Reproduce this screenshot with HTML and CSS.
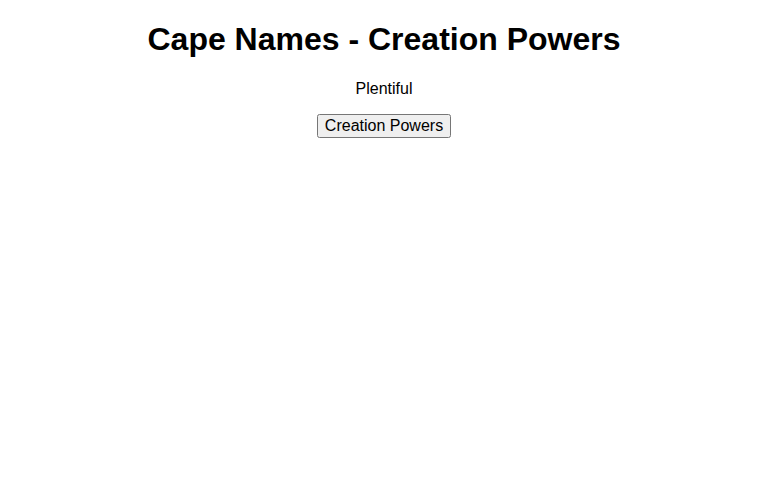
FILE: index.html
```html
<!DOCTYPE html>
<html lang="en">
<head>
    <meta charset="UTF-8">
    <meta name="viewport" content="width=device-width, initial-scale=1.0">
    <title>Cape Names - Creation Powers</title>
    <link rel="stylesheet" href="styles.css">
</head>
<body>
    <h1>Cape Names - Creation Powers</h1>
    <p id="capeName">Plentiful</p>
    <button class="generate">Creation Powers</button>
</body>
</html>
```

FILE: styles.css
```css
body {
    margin: 0 8px;
    font-family: 'Liberation Sans', Arial, sans-serif;
    text-align: center;
    color: #000;
    background-color: #fff;
}

.generate {
    font-family: 'Liberation Sans', Arial, sans-serif;
    font-size: 16px;
}
```
